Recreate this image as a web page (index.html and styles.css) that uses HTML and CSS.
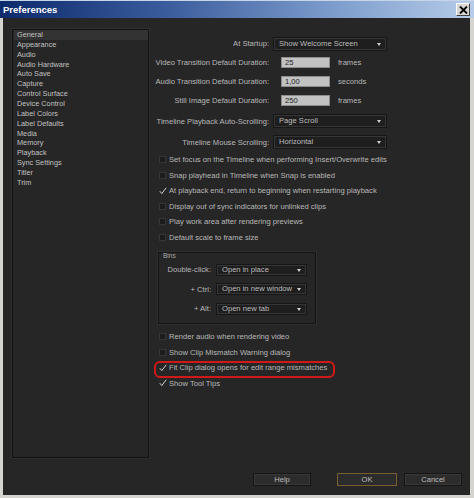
FILE: index.html
```html
<!DOCTYPE html>
<html>
<head>
<meta charset="utf-8">
<link rel="stylesheet" href="styles.css">
</head>
<body>
<div class="window">
  <div class="titlebar">
    <span class="title">Preferences</span>
    <span class="close"><svg width="9" height="8" viewBox="0 0 9 8"><path d="M1 0.5 L8 7.5 M8 0.5 L1 7.5" stroke="#000" stroke-width="1.8"/></svg></span>
  </div>
  <div class="client">
    <div class="main">
      <ul class="nav">
        <li class="active">General</li>
        <li>Appearance</li>
        <li>Audio</li>
        <li>Audio Hardware</li>
        <li>Auto Save</li>
        <li>Capture</li>
        <li>Control Surface</li>
        <li>Device Control</li>
        <li>Label Colors</li>
        <li>Label Defaults</li>
        <li>Media</li>
        <li>Memory</li>
        <li>Playback</li>
        <li>Sync Settings</li>
        <li>Titler</li>
        <li>Trim</li>
      </ul>
      <div class="settings">
        <div class="form">
          <div class="row"><span class="lbl">At Startup:</span><span class="select">Show Welcome Screen<i class="arrow"></i></span></div>
          <div class="row"><span class="lbl">Video Transition Default Duration:</span><span class="input">25</span><span class="unit">frames</span></div>
          <div class="row"><span class="lbl">Audio Transition Default Duration:</span><span class="input">1,00</span><span class="unit">seconds</span></div>
          <div class="row"><span class="lbl">Still Image Default Duration:</span><span class="input">250</span><span class="unit">frames</span></div>
          <div class="row tall"><span class="lbl">Timeline Playback Auto-Scrolling:</span><span class="select">Page Scroll<i class="arrow"></i></span></div>
          <div class="row mid"><span class="lbl">Timeline Mouse Scrolling:</span><span class="select">Horizontal<i class="arrow"></i></span></div>
        </div>
        <div class="checks first">
          <div class="check"><span class="box"></span>Set focus on the Timeline when performing Insert/Overwrite edits</div>
          <div class="check"><span class="box"></span>Snap playhead in Timeline when Snap is enabled</div>
          <div class="check"><span class="tick"><svg width="8" height="8" viewBox="0 0 8 8"><path d="M0.8 4.2 L2.8 6.6 L7.2 0.8" fill="none" stroke="#d2d2d2" stroke-width="1"/></svg></span>At playback end, return to beginning when restarting playback</div>
          <div class="check"><span class="box"></span>Display out of sync indicators for unlinked clips</div>
          <div class="check"><span class="box"></span>Play work area after rendering previews</div>
          <div class="check"><span class="box"></span>Default scale to frame size</div>
        </div>
        <div class="bins">
          <div class="bins-title">Bins</div>
          <div class="brow"><span class="blbl">Double-click:</span><span class="select small">Open in place<i class="arrow"></i></span></div>
          <div class="brow"><span class="blbl">+ Ctrl:</span><span class="select small">Open in new window<i class="arrow"></i></span></div>
          <div class="brow"><span class="blbl">+ Alt:</span><span class="select small">Open new tab<i class="arrow"></i></span></div>
        </div>
        <div class="checks second">
          <div class="check"><span class="box"></span>Render audio when rendering video</div>
          <div class="check"><span class="box"></span>Show Clip Mismatch Warning dialog</div>
          <div class="check marked"><span class="tick"><svg width="8" height="8" viewBox="0 0 8 8"><path d="M0.8 4.2 L2.8 6.6 L7.2 0.8" fill="none" stroke="#d2d2d2" stroke-width="1"/></svg></span>Fit Clip dialog opens for edit range mismatches</div>
          <div class="check"><span class="tick"><svg width="8" height="8" viewBox="0 0 8 8"><path d="M0.8 4.2 L2.8 6.6 L7.2 0.8" fill="none" stroke="#d2d2d2" stroke-width="1"/></svg></span>Show Tool Tips</div>
        </div>
      </div>
    </div>
    <div class="buttons">
      <span class="btn">Help</span>
      <span class="btn ok">OK</span>
      <span class="btn">Cancel</span>
    </div>
  </div>
</div>
</body>
</html>
```
FILE: styles.css
```css
* { box-sizing: border-box; }
html, body { margin: 0; padding: 0; }
body {
  width: 474px;
  height: 498px;
  background: #d6d4ce;
  font-family: "Liberation Sans", Arial, sans-serif;
  font-size: 7.3px;
  color: #b8b8b8;
  overflow: hidden;
}
.window {
  width: 474px;
  height: 498px;
  display: flex;
  flex-direction: column;
}
.titlebar {
  height: 18px;
  flex: none;
  display: flex;
  align-items: center;
  justify-content: space-between;
  padding: 0 4px 0 3px;
  background: linear-gradient(to right, #0c2a6c 0%, #3a5c9c 35%, #7c9ccc 70%, #b6cce8 100%);
  border-top: 1px solid #c8d4e8;
}
.title {
  color: #fff;
  font-weight: bold;
  font-size: 9.5px;
  font-family: "Liberation Sans", Arial, sans-serif;
}
.close {
  width: 14px;
  height: 13px;
  background: #d8d6d0;
  border: 1px solid;
  border-color: #fff #404040 #404040 #fff;
  display: flex;
  align-items: center;
  justify-content: center;
}
.client {
  margin: 0 4px 3px 3px;
  height: 477px;
  background: #262626;
  display: flex;
  flex-direction: column;
}
.main {
  display: flex;
  padding: 11px 0 0 9px;
}
.nav {
  list-style: none;
  margin: 0;
  padding: 0 0 0 1px;
  width: 137px;
  height: 429px;
  border: 1px solid #121212;
  box-shadow: 0 0 0 1px #2e2e2e;
  background: #262626;
  flex: none;
}
.nav li {
  height: 9.87px;
  line-height: 9.87px;
  padding-left: 3px;
  color: #c0c0c0;
  white-space: nowrap;
}
.nav li.active {
  background: #333333;
}
.settings {
  margin-left: 6px;
  padding-top: 5px;
  display: flex;
  flex-direction: column;
  font-size: 7.6px;
}
.form { display: flex; flex-direction: column; }
.row {
  height: 19px;
  display: flex;
  align-items: center;
}
.row.tall { height: 22px; }
.row.mid { height: 20px; }
.lbl {
  width: 114px;
  display: flex;
  justify-content: flex-end;
  white-space: nowrap;
  margin-right: 5px;
}
.select {
  position: relative;
  width: 112px;
  height: 12px;
  line-height: 10px;
  padding-left: 4px;
  background: #1e1e1e;
  border: 1px solid #363636;
  box-shadow: 0 0 0 1px #161616;
  color: #bcbcbc;
  white-space: nowrap;
  display: flex;
  align-items: center;
}
.select.small {
  width: 89px;
  height: 10px;
}
.arrow {
  position: absolute;
  right: 4px;
  top: 50%;
  margin-top: -1px;
  width: 0;
  height: 0;
  border-left: 2.5px solid transparent;
  border-right: 2.5px solid transparent;
  border-top: 3px solid #d0d0d0;
}
.input {
  margin-left: 7px;
  width: 49px;
  height: 11px;
  line-height: 9px;
  padding-left: 3px;
  background: #c2c2c2;
  border: 1px solid #8c8c8c;
  color: #222;
}
.unit {
  margin-left: 8px;
}
.checks { display: flex; flex-direction: column; }
.checks.second { margin-top: 5px; }
.check {
  position: relative;
  height: 15.5px;
  display: flex;
  align-items: center;
  padding-left: 4px;
  white-space: nowrap;
}
.box {
  width: 7px;
  height: 7px;
  background: #1c1c1c;
  border: 1px solid #363636;
  margin-right: 3px;
  flex: none;
}
.tick {
  width: 8px;
  height: 8px;
  margin-right: 2px;
  flex: none;
  display: flex;
}
.check.marked::after {
  content: "";
  position: absolute;
  left: -1px;
  top: 1px;
  width: 177px;
  height: 13px;
  border: 2px solid #d01818;
  border-radius: 6px;
}
.bins {
  margin: 7px 0 0 3px;
  width: 158px;
  height: 72px;
  border: 1px solid #151515;
  box-shadow: 0 0 0 1px #2f2f2f;
  padding-bottom: 5px;
}
.bins-title {
  height: 7px;
  line-height: 6px;
  padding-left: 4px;
  font-size: 6.5px;
  color: #aaaaaa;
}
.brow {
  height: 19.5px;
  display: flex;
  align-items: center;
}
.blbl {
  width: 52px;
  display: flex;
  justify-content: flex-end;
  white-space: nowrap;
  margin-right: 6px;
}
.buttons {
  margin-top: 15px;
  display: flex;
  justify-content: flex-end;
  padding-right: 8px;
  font-size: 7.6px;
}
.btn {
  width: 58px;
  height: 13px;
  line-height: 11px;
  text-align: center;
  background: #2c2c2c;
  border: 1px solid #151515;
  box-shadow: inset 0 0 0 1px #383838;
  color: #bcbcbc;
}
.btn.ok {
  width: 60px;
  margin-left: 26px;
  margin-right: 7px;
  border-color: #7a5e30;
  box-shadow: inset 0 0 0 1px #2a2a2a;
}
```
